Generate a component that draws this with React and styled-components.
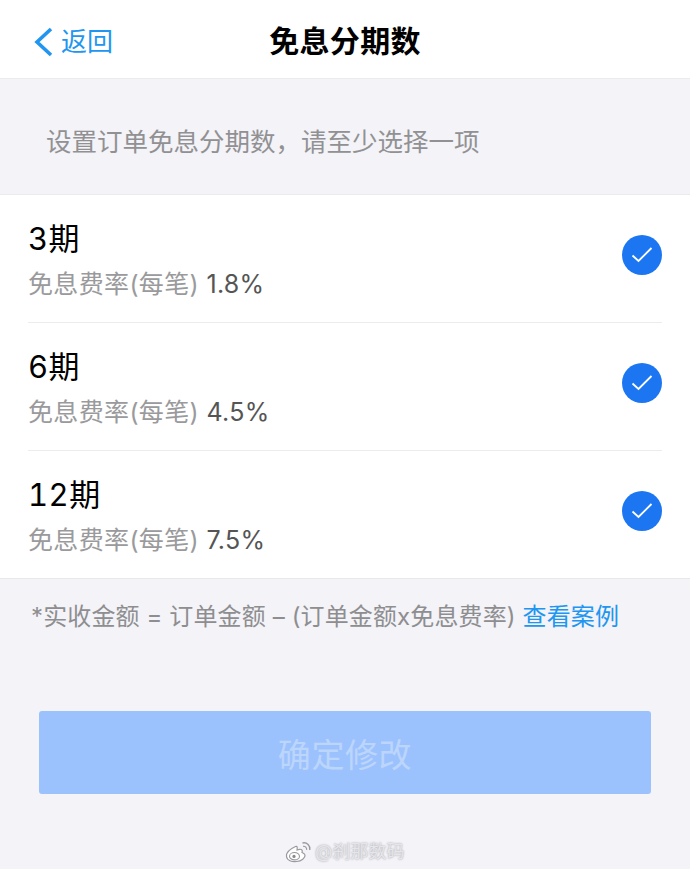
import React from "react";
import styled, { createGlobalStyle } from "styled-components";

const GlobalStyle = createGlobalStyle`
  html, body {
    margin: 0;
    padding: 0;
    background: #f3f3f8;
  }
  * { box-sizing: border-box; }
`;

const Page = styled.div`
  position: relative;
  width: 690px;
  height: 869px;
  overflow: hidden;
  background: #f3f3f8;
  font-family: Inter, "Noto Sans CJK SC", sans-serif;
`;

const NavBar = styled.header`
  position: relative;
  height: 79px;
  background: #fff;
  border-bottom: 1px solid #ebebed;
  display: flex;
  align-items: center;
  justify-content: center;
`;

const BackButton = styled.div`
  position: absolute;
  left: 33px;
  top: 27px;
  display: flex;
  align-items: center;
  gap: 8px;
  color: #2196f0;
  font-size: 26px;
  line-height: 30px;
`;

const Title = styled.h1`
  margin: 0;
  font-size: 30px;
  font-weight: 700;
  letter-spacing: 0.3px;
  color: #000;
`;

const Hint = styled.div`
  height: 116px;
  padding: 46px 0 0 46px;
  font-size: 25.5px;
  line-height: 34px;
  color: #919193;
  border-bottom: 1px solid #ebebed;
`;

const List = styled.section`
  background: #fff;
  padding: 0 28px;
  border-bottom: 1px solid #e8e8ea;
`;

const Row = styled.div`
  height: ${(p) => (p.$last ? "127px" : "128px")};
  display: flex;
  align-items: center;
  justify-content: space-between;
  border-bottom: ${(p) => (p.$last ? "none" : "1px solid #ececee")};
`;

const RowText = styled.div`
  display: flex;
  flex-direction: column;
  gap: 12px;
  margin-top: 3px;
`;

const Term = styled.div`
  font-size: 31px;
  line-height: 36px;
  letter-spacing: 0.5px;
  font-variant-numeric: tabular-nums;
  color: #000;
`;

const Rate = styled.div`
  font-size: 25px;
  line-height: 30px;
  letter-spacing: 0.35px;
  color: #9a9a9c;
`;

const RateValue = styled.span`
  color: #555;
  letter-spacing: 0.3px;
`;

const CheckCircle = styled.div`
  width: 40px;
  height: 40px;
  border-radius: 50%;
  background: #1c76f2;
  display: flex;
  align-items: center;
  justify-content: center;
  margin-top: -8px;
`;

const Note = styled.div`
  padding: 21px 0 0 31px;
  font-size: 24px;
  line-height: 34px;
  letter-spacing: 0.12px;
  color: #8e8e90;
  white-space: nowrap;
`;

const NoteLink = styled.span`
  color: #2196f0;
`;

const Submit = styled.div`
  margin: 77px 39px 0;
  height: 83px;
  border-radius: 3px;
  background: #9cc2fe;
  color: #bcd5fb;
  font-size: 33px;
  letter-spacing: 0.6px;
  display: flex;
  align-items: center;
  justify-content: center;
`;

const Watermark = styled.div`
  position: absolute;
  left: 285px;
  top: 839px;
  display: flex;
  align-items: center;
  gap: 3px;
  color: #e6e6ea;
  font-size: 18px;
  line-height: 26px;
  text-shadow: 0 0 2px #9c9ca0;
`;

const Chevron = () => (
  <svg width="20" height="30" viewBox="0 0 20 30" fill="none">
    <path d="M18 2 L4 15 L18 28" stroke="#2196f0" strokeWidth="3.6" />
  </svg>
);

const Check = () => (
  <svg width="22" height="18" viewBox="0 0 22 18" fill="none">
    <path d="M1.5 9.5 L7.5 15 L20.5 2" stroke="#fff" strokeWidth="1.8" />
  </svg>
);

const WeiboLogo = () => (
  <svg width="27" height="22" viewBox="0 0 27 22" fill="none">
    <path
      d="M10.5 5.5 C5 8 1 12 1.5 15.5 C2 19.5 7 21 11.5 20.5 C16.5 20 20.5 17 20 14 C19.7 12.5 18 12 17 11.5 C17.8 9.5 17 8 14.5 8.3 L12 9 C12.6 6 12 4.8 10.5 5.5 Z"
      fill="#fff"
      stroke="#9a9a9e"
      strokeWidth="1.2"
    />
    <ellipse cx="9.5" cy="15.2" rx="5" ry="3.7" fill="none" stroke="#9a9a9e" strokeWidth="1.1" />
    <circle cx="9" cy="15.4" r="1.6" fill="#8a8a8e" />
    <path d="M17.5 2 C22 1 25.5 4.5 24.8 9" stroke="#9a9a9e" strokeWidth="1.4" />
    <path d="M18 5.3 C20.2 5 22 6.5 21.6 8.8" stroke="#9a9a9e" strokeWidth="1.2" />
  </svg>
);

const plans = [
  { term: "3期", rate: "1.8%" },
  { term: "6期", rate: "4.5%" },
  { term: "12期", rate: "7.5%" },
];

export default function App() {
  return (
    <Page>
      <GlobalStyle />
      <NavBar>
        <BackButton>
          <Chevron />
          <span>返回</span>
        </BackButton>
        <Title>免息分期数</Title>
      </NavBar>
      <Hint>设置订单免息分期数，请至少选择一项</Hint>
      <List>
        {plans.map((plan, i) => (
          <Row key={plan.term} $last={i === plans.length - 1}>
            <RowText>
              <Term>{plan.term}</Term>
              <Rate>
                免息费率(每笔) <RateValue>{plan.rate}</RateValue>
              </Rate>
            </RowText>
            <CheckCircle>
              <Check />
            </CheckCircle>
          </Row>
        ))}
      </List>
      <Note>
        *实收金额 = 订单金额 – (订单金额x免息费率) <NoteLink>查看案例</NoteLink>
      </Note>
      <Submit>确定修改</Submit>
      <Watermark>
        <WeiboLogo />
        <span>@刹那数码</span>
      </Watermark>
    </Page>
  );
}
